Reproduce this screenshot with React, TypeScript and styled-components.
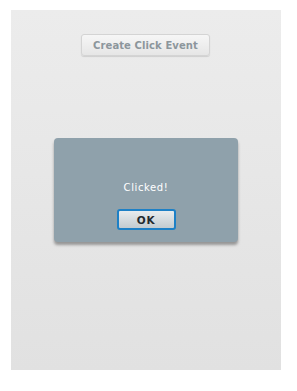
import React from "react";
import styled, { createGlobalStyle } from "styled-components";

const GlobalStyle = createGlobalStyle`
  html, body {
    margin: 0;
    padding: 0;
    background: #ffffff;
  }
  body {
    font-family: "DejaVu Sans", Verdana, sans-serif;
  }
`;

const Page = styled.div`
  padding: 10px 16px 21px 11px;
`;

const Stage = styled.div`
  position: relative;
  width: 270px;
  height: 360px;
  background: linear-gradient(to bottom, #ececec 0%, #e1e1e1 100%);
  display: flex;
  flex-direction: column;
  align-items: center;
  padding-top: 24px;
  box-sizing: border-box;
`;

const EventButton = styled.button`
  width: 129px;
  height: 22px;
  margin-left: -1px;
  border: 1px solid #d4d4d4;
  border-radius: 3px;
  background: linear-gradient(to bottom, #f6f6f6 0%, #e6e6e6 100%);
  box-shadow: 0 1px 1px rgba(0, 0, 0, 0.12);
  color: #8c969c;
  font-family: "DejaVu Sans", Verdana, sans-serif;
  font-weight: bold;
  font-size: 10px;
  letter-spacing: 0.1px;
  padding: 0;
  cursor: pointer;
`;

const Dialog = styled.div`
  position: absolute;
  left: 43px;
  top: 128px;
  width: 184px;
  height: 104px;
  background: #8fa1ab;
  border-radius: 4px;
  box-shadow: 0 3px 3px rgba(0, 0, 0, 0.35);
  display: flex;
  flex-direction: column;
  align-items: center;
  padding-top: 44px;
  box-sizing: border-box;
`;

const Message = styled.div`
  color: #ffffff;
  font-family: "DejaVu Sans", Verdana, sans-serif;
  font-size: 10px;
  letter-spacing: 0.6px;
  line-height: 12px;
`;

const OkButton = styled.button`
  margin-top: 15px;
  width: 59px;
  height: 21px;
  border: 2px solid #1d80c6;
  border-radius: 3px;
  background: linear-gradient(to bottom, #e8ecee 0%, #c2cbd0 100%);
  color: #1f2a30;
  font-family: "DejaVu Sans", Verdana, sans-serif;
  font-weight: bold;
  font-size: 10.5px;
  letter-spacing: 0.6px;
  padding: 0;
  cursor: pointer;
`;

export default function App() {
  return (
    <>
      <GlobalStyle />
      <Page>
        <Stage>
          <EventButton>Create Click Event</EventButton>
          <Dialog>
            <Message>Clicked!</Message>
            <OkButton>OK</OkButton>
          </Dialog>
        </Stage>
      </Page>
    </>
  );
}
